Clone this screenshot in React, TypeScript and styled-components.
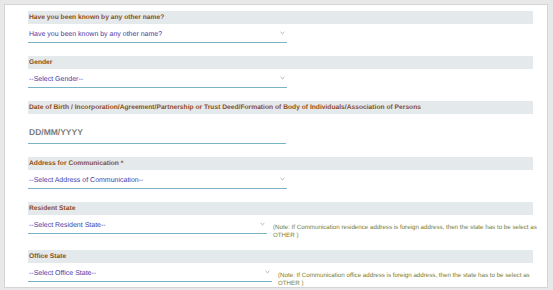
import styled, { createGlobalStyle } from 'styled-components';

const GlobalStyle = createGlobalStyle`
  html, body {
    margin: 0;
    padding: 0;
    background: #e8e8e8;
    font-family: "Liberation Sans", Arial, sans-serif;
    text-rendering: geometricPrecision;
  }
`;

const Page = styled.div`
  height: 290px;
  padding: 4px 5px 2px 4px;
  box-sizing: border-box;
  overflow: hidden;
`;

const Card = styled.div`
  height: 284px;
  box-sizing: border-box;
  padding: 6px 14px 0 23px;
  background: #fff;
  border: 1px solid #d4d4d4;
  overflow: hidden;
`;

const Group = styled.div<{ $gap?: number }>`
  margin-bottom: ${(p) => p.$gap ?? 13}px;
`;

const Label = styled.div`
  height: 13px;
  padding-left: 1px;
  display: flex;
  align-items: center;
  background: #e4e9ec;
  color: #8d4d1b;
  font-size: 6.7px;
  font-weight: 700;
  white-space: nowrap;
`;

const Row = styled.div`
  display: flex;
  align-items: flex-start;
  gap: 6px;
`;

const Select = styled.div<{ $width: number }>`
  position: relative;
  flex: none;
  width: ${(p) => p.$width}px;
  height: 19px;
  box-sizing: border-box;
  padding: 3px 0 0 1px;
  display: flex;
  align-items: center;
  color: #4b3ba6;
  font-size: 7px;
  border-bottom: 1.5px solid #78b3c6;
`;

const Chevron = styled.svg`
  position: absolute;
  right: 2px;
  top: 7px;
`;

const DateInput = styled.div`
  width: 258px;
  height: 30px;
  box-sizing: border-box;
  padding: 6px 0 0 1px;
  display: flex;
  align-items: center;
  color: #7a7a7a;
  font-size: 8.5px;
  font-weight: 700;
  border-bottom: 1.5px solid #78b3c6;
`;

const Note = styled.div`
  padding-top: 9px;
  color: #7a7d34;
  font-size: 6.2px;
  line-height: 8px;
  white-space: nowrap;
`;

function Arrow() {
  return (
    <Chevron width="5" height="4" viewBox="0 0 5 4">
      <path d="M0.6 1 L2.5 2.8 L4.4 1" fill="none" stroke="#9a9a9a" strokeWidth="0.8" />
    </Chevron>
  );
}

function SelectField({ label, value, width = 259 }: { label: string; value: string; width?: number }) {
  return (
    <Group>
      <Label>{label}</Label>
      <Select $width={width}>
        {value}
        <Arrow />
      </Select>
    </Group>
  );
}

function StateField({ label, value, width, kind }: { label: string; value: string; width: number; kind: string }) {
  return (
    <Group $gap={10}>
      <Label>{label}</Label>
      <Row>
        <Select $width={width}>
          {value}
          <Arrow />
        </Select>
        <Note>
          (Note: If Communication {kind} address is foreign address, then the state has to be select as
          <br />
          OTHER )
        </Note>
      </Row>
    </Group>
  );
}

export default function App() {
  return (
    <>
      <GlobalStyle />
      <Page>
        <Card>
          <SelectField label="Have you been known by any other name?" value="Have you been known by any other name?" />
          <SelectField label="Gender" value="--Select Gender--" />
          <Group>
            <Label>Date of Birth / Incorporation/Agreement/Partnership or Trust Deed/Formation of Body of Individuals/Association of Persons</Label>
            <DateInput>DD/MM/YYYY</DateInput>
          </Group>
          <SelectField label="Address for Communication *" value="--Select Address of Communication--" />
          <StateField label="Resident State" value="--Select Resident State--" width={239} kind="residence" />
          <StateField label="Office State" value="--Select Office State--" width={244} kind="office" />
        </Card>
      </Page>
    </>
  );
}
